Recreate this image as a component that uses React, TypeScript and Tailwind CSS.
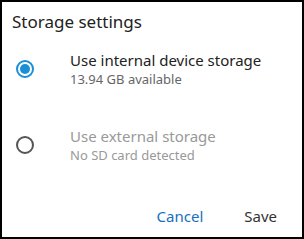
export default function App() {
  const font = { fontFamily: '"Noto Sans", "Open Sans", sans-serif' };
  return (
    <div className="w-[304px] h-[239px] bg-white border-2 border-black flex flex-col" style={font}>
      <div className="pl-[10px] pt-[8px] text-[17px] leading-[24px] text-[#222]">Storage settings</div>
      <div className="flex items-center mt-[16px]">
        <div className="w-[68px] flex justify-center pr-[22px]">
          <div className="w-[18px] h-[18px] rounded-full border-2 border-[#1a8fd6] flex items-center justify-center">
            <div className="w-[10px] h-[10px] rounded-full bg-[#1a8fd6]" />
          </div>
        </div>
        <div className="flex flex-col">
          <div className="text-[15px] leading-[20px] text-[#222]">Use internal device storage</div>
          <div className="text-[13px] leading-[18px] text-[#666]">13.94 GB available</div>
        </div>
      </div>
      <div className="flex items-center mt-[38px]">
        <div className="w-[68px] flex justify-center pr-[22px]">
          <div className="w-[18px] h-[18px] rounded-full border-2 border-[#555]" />
        </div>
        <div className="flex flex-col">
          <div className="text-[15px] leading-[20px] text-[#999]">Use external storage</div>
          <div className="text-[13px] leading-[18px] text-[#999]">No SD card detected</div>
        </div>
      </div>
      <div className="flex justify-end items-center mt-auto mb-[10px] pr-[25px] gap-[41px] text-[15px]">
        <span className="text-[#1670c0]">Cancel</span>
        <span className="text-[#333]">Save</span>
      </div>
    </div>
  );
}
